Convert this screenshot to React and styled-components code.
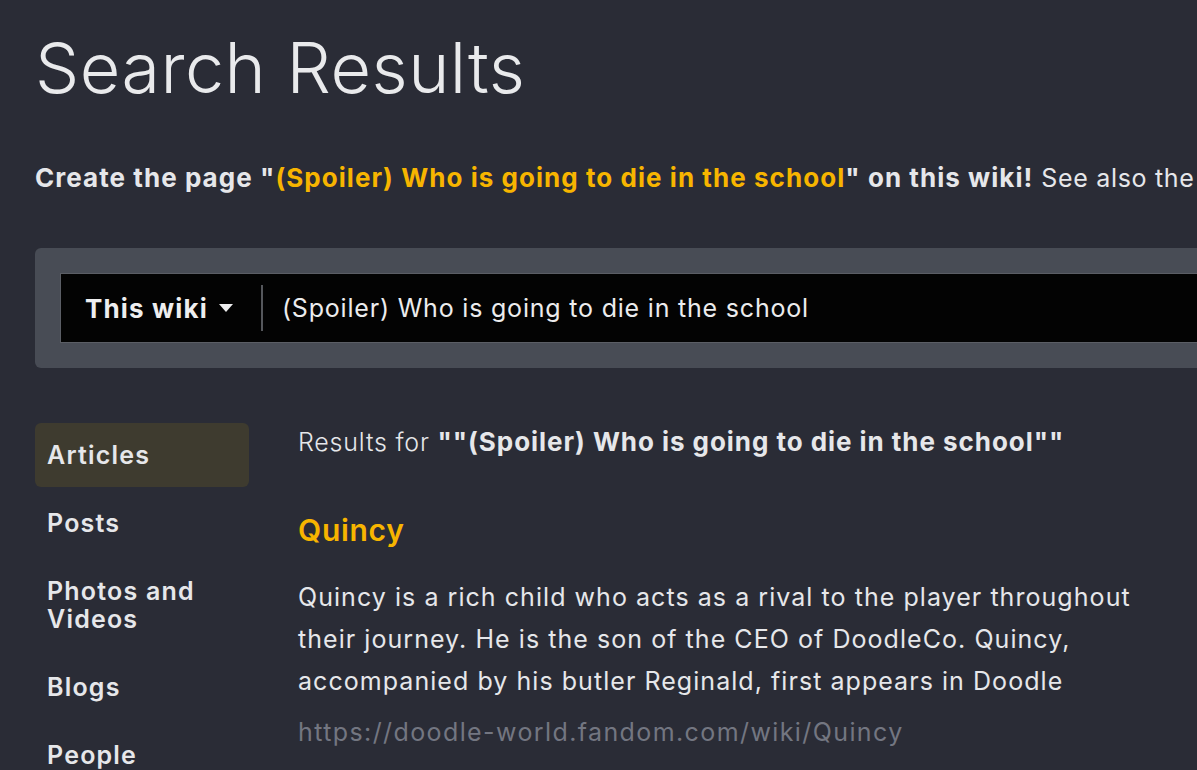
import styled, { createGlobalStyle } from 'styled-components';

const GlobalStyle = createGlobalStyle`
  html, body {
    margin: 0;
    padding: 0;
    background: #2a2c36;
    overflow: hidden;
  }
  body {
    font-family: Inter, "Noto Sans", sans-serif;
    color: #e6e7ea;
  }
`;

const Page = styled.main`
  width: 1500px;
  padding: 22px 0 0 35px;
  box-sizing: border-box;
  height: 770px;
`;

const Title = styled.h1`
  margin: 0;
  font-size: 70px;
  font-weight: 300;
  line-height: 92px;
  letter-spacing: 0.5px;
  color: #e9eaec;
`;

const CreateLine = styled.p`
  margin: 49px 0 0;
  font-size: 25px;
  line-height: 30px;
  letter-spacing: 0.7px;
  white-space: nowrap;
  color: #e6e7ea;
`;

const Strong = styled.b`
  font-size: 26px;
  font-weight: 700;
  letter-spacing: 1.05px;
`;

const Link = styled.a`
  color: #f7b500;
  font-weight: 700;
  text-decoration: none;
`;

const SearchPanel = styled.div`
  margin-top: 55px;
  background: #484c55;
  border-radius: 6px;
  padding: 25px;
  width: 1400px;
  box-sizing: border-box;
`;

const SearchBar = styled.div`
  display: flex;
  align-items: center;
  height: 70px;
  background: #030303;
  border: 1px solid #5b5e65;
  box-sizing: border-box;
`;

const Scope = styled.button`
  display: flex;
  align-items: center;
  gap: 10px;
  background: none;
  border: 0;
  padding: 0 27px 0 24px;
  height: 46px;
  border-right: 2px solid #55575c;
  color: #eeeeef;
  font: 700 26px Inter, "Noto Sans", sans-serif;
  letter-spacing: 1.15px;
`;

const Caret = styled.svg`
  width: 16px;
  height: 10px;
`;

const Query = styled.span`
  padding-left: 19px;
  font-size: 25px;
  font-weight: 400;
  letter-spacing: 0.8px;
  color: #ececed;
`;

const Body = styled.div`
  display: flex;
  margin-top: 55px;
  gap: 49px;
`;

const Sidebar = styled.nav`
  width: 214px;
  display: flex;
  flex-direction: column;
  gap: 4px;
`;

const NavItem = styled.div`
  padding: 18px 12px;
  border-radius: 6px;
  font-size: 25px;
  font-weight: 600;
  line-height: 28px;
  letter-spacing: 1.2px;
  color: #e6e7ea;
  background: ${(p) => (p.$active ? '#3e3b2f' : 'transparent')};
`;

const Results = styled.section`
  width: 850px;
`;

const ResultsFor = styled.p`
  margin: 4px 0 0;
  font-size: 25px;
  line-height: 30px;
  font-weight: 300;
  letter-spacing: 0.8px;
  white-space: nowrap;
`;

const ResultsQuery = styled.b`
  font-size: 26px;
  font-weight: 700;
  letter-spacing: 0.95px;
`;

const ResultTitle = styled.h2`
  margin: 55px 0 0;
  font-size: 30px;
  line-height: 36px;
  font-weight: 600;
  letter-spacing: 0.7px;
  color: #f7b500;
`;

const Snippet = styled.p`
  margin: 28px 0 0;
  font-size: 25px;
  line-height: 42px;
  font-weight: 400;
  letter-spacing: 1.05px;
  color: #e6e7ea;
`;

const Url = styled.div`
  margin-top: 15px;
  font-size: 25px;
  line-height: 30px;
  letter-spacing: 1.4px;
  color: #737681;
`;

const navItems = ['Articles', 'Posts', 'Photos and Videos', 'Blogs', 'People'];

export default function App() {
  return (
    <>
      <GlobalStyle />
      <Page>
        <Title>Search Results</Title>
        <CreateLine>
          <Strong>
            Create the page "<Link href="#">(Spoiler) Who is going to die in the school</Link>" on this wiki!
          </Strong>{' '}
          See also the search results found.
        </CreateLine>
        <SearchPanel>
          <SearchBar>
            <Scope>
              This wiki
              <Caret viewBox="0 0 16 10">
                <path d="M1 1h14L8 9z" fill="#eeeeef" />
              </Caret>
            </Scope>
            <Query>(Spoiler) Who is going to die in the school</Query>
          </SearchBar>
        </SearchPanel>
        <Body>
          <Sidebar>
            {navItems.map((item, i) => (
              <NavItem key={item} $active={i === 0}>
                {item === 'Photos and Videos' ? (
                  <>
                    Photos and
                    <br />
                    Videos
                  </>
                ) : (
                  item
                )}
              </NavItem>
            ))}
          </Sidebar>
          <Results>
            <ResultsFor>
              Results for <ResultsQuery>""(Spoiler) Who is going to die in the school""</ResultsQuery>
            </ResultsFor>
            <ResultTitle>Quincy</ResultTitle>
            <Snippet>
              Quincy is a rich child who acts as a rival to the player throughout their journey. He is the son of
              the CEO of DoodleCo. Quincy, accompanied by his butler Reginald, first appears in Doodle
            </Snippet>
            <Url>https://doodle-world.fandom.com/wiki/Quincy</Url>
          </Results>
        </Body>
      </Page>
    </>
  );
}
